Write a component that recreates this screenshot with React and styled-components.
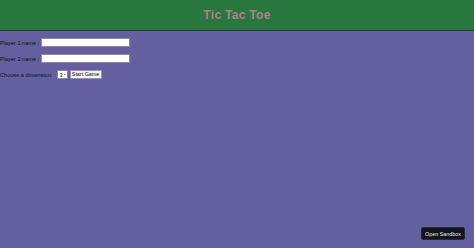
import React from 'react';
import styled, { createGlobalStyle } from 'styled-components';

const GlobalStyle = createGlobalStyle`
    html, body {
        margin: 0;
        padding: 0;
        height: 100%;
        background: #6460a0;
        font-family: 'Liberation Sans', Arial, sans-serif;
    }
    #root {
        height: 100%;
    }
`;

const Page = styled.div`
    position: relative;
    height: 248px;
    overflow: hidden;
`;

const Header = styled.header`
    height: 30px;
    background: #27773f;
    border-bottom: 1px solid #1d3b33;
    display: flex;
    align-items: center;
    justify-content: center;
`;

const Title = styled.h1`
    margin: 0;
    font-size: 12px;
    font-weight: bold;
    color: #b87d8d;
    letter-spacing: 0.3px;
`;

const Form = styled.div`
    display: flex;
    flex-direction: column;
    gap: 7px;
    padding-top: 7px;
`;

const Row = styled.div`
    display: flex;
    align-items: center;
    height: 9px;
    font-size: 5.6px;
    color: #111;
`;

const Label = styled.span`
    margin-right: 2px;
    white-space: pre;
`;

const TextInput = styled.input`
    box-sizing: border-box;
    width: 89px;
    height: 9px;
    margin: 0;
    padding: 0 2px;
    border: 1px solid #8d8aa8;
    background: #fff;
    font-size: 6px;
`;

const Select = styled.div`
    box-sizing: border-box;
    display: flex;
    align-items: center;
    gap: 1px;
    height: 9px;
    width: 11px;
    padding: 0 1px 0 2px;
    margin-left: 2px;
    margin-right: 2px;
    background: #fff;
    border: 1px solid #8d8aa8;
    border-radius: 1px;
`;

const SmallButton = styled.button`
    box-sizing: border-box;
    width: 32px;
    height: 9px;
    padding: 0;
    margin: 0;
    background: #f2f2f2;
    border: 1px solid #9a98b0;
    border-radius: 1px;
    font-family: inherit;
    font-size: 5.4px;
    line-height: 1;
    color: #111;
    white-space: nowrap;
`;

const SandboxButton = styled.button`
    position: absolute;
    right: 9px;
    bottom: 8px;
    width: 44px;
    height: 13px;
    padding: 0;
    background: #151520;
    color: #e8e8ee;
    border: 1px solid #2a2a38;
    border-radius: 2px;
    font-family: inherit;
    font-size: 5.4px;
    white-space: nowrap;
`;

export default function App() {
    return (
        <Page>
            <GlobalStyle />
            <Header>
                <Title>Tic Tac Toe</Title>
            </Header>
            <Form>
                <Row>
                    <Label>Player 1 name :</Label>
                    <TextInput />
                </Row>
                <Row>
                    <Label>Player 2 name :</Label>
                    <TextInput />
                </Row>
                <Row>
                    <Label>Choose a dimension:</Label>
                    <Select>
                        3
                        <svg width="4" height="3" viewBox="0 0 4 3">
                            <path d="M0.3 0.5 L2 2.4 L3.7 0.5" fill="none" stroke="#111" strokeWidth="0.9" />
                        </svg>
                    </Select>
                    <SmallButton>Start Game</SmallButton>
                </Row>
            </Form>
            <SandboxButton>Open Sandbox</SandboxButton>
        </Page>
    );
}
